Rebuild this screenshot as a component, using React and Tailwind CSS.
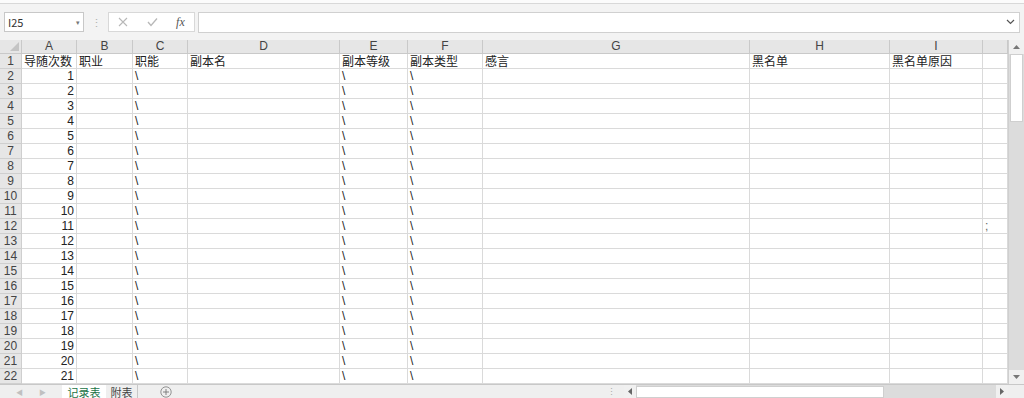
import React from "react";

const cols = [
  { w: 55, l: "A" },
  { w: 56, l: "B" },
  { w: 55, l: "C" },
  { w: 152, l: "D" },
  { w: 68, l: "E" },
  { w: 75, l: "F" },
  { w: 267, l: "G" },
  { w: 140, l: "H" },
  { w: 93, l: "I" },
  { w: 25, l: "" },
];

const headerRow = ["导随次数", "职业", "职能", "副本名", "副本等级", "副本类型", "感言", "黑名单", "黑名单原因", ""];

const font = { fontFamily: '"Noto Sans CJK SC", "Liberation Sans", sans-serif' };
const latin = { fontFamily: '"Liberation Sans", "Noto Sans CJK SC", sans-serif' };

function Cell({ children, align = "left", extra = "", style }) {
  return (
    <div
      className={`h-[15px] border-r border-b border-[#dadada] bg-white text-[12px] leading-[14px] text-[#222] whitespace-nowrap px-[2px] ${
        align === "right" ? "text-right" : "text-left"
      } ${extra}`}
      style={style}
    >
      {children}
    </div>
  );
}

export default function App() {
  const rows = [];
  for (let r = 1; r <= 22; r++) rows.push(r);
  const template = "22px " + cols.map((c) => c.w + "px").join(" ");

  return (
    <div className="w-[1024px] h-[398px] bg-[#f3f3f3] overflow-hidden flex flex-col" style={font}>
      {/* ribbon remnant */}
      <div className="h-[4px] bg-[#fbfbfb] border-b border-[#d8d8d8] shrink-0"></div>
      {/* formula bar */}
      <div className="h-[36px] flex items-center px-[4px] shrink-0">
        <div className="w-[80px] h-[20px] bg-white border border-[#c8c8c8] flex items-center justify-between px-[3px] text-[11px] text-[#333]">
          <span>I25</span>
          <span className="text-[7px] text-[#777]">▾</span>
        </div>
        <div className="w-[24px] flex justify-center text-[#b0b0b0] text-[11px]">⋮</div>
        <div className="w-[87px] h-[20px] bg-white border border-[#d8d8d8] flex items-center justify-around text-[#b8b8b8]">
          <svg width="10" height="10" viewBox="0 0 10 10"><path d="M1 1 L9 9 M9 1 L1 9" stroke="#b8b8b8" strokeWidth="1.1" fill="none" /></svg>
          <svg width="11" height="10" viewBox="0 0 11 10"><path d="M1 5 L4 8.5 L10 1.5" stroke="#b8b8b8" strokeWidth="1.3" fill="none" /></svg>
          <span className="text-[12px] italic text-[#555]" style={{ fontFamily: '"Liberation Serif", serif' }}>fx</span>
        </div>
        <div className="w-[3px]"></div>
        <div className="flex-1 h-[21px] bg-white border border-[#d0d0d0] flex items-center justify-end pr-[4px]">
          <svg width="9" height="6" viewBox="0 0 9 6"><path d="M1 1 L4.5 4.5 L8 1" stroke="#555" strokeWidth="1.2" fill="none" /></svg>
        </div>
      </div>
      {/* grid + vscroll */}
      <div className="flex shrink-0 h-[344px]">
        <div className="w-[1008px] overflow-hidden bg-white">
          <div className="grid" style={{ gridTemplateColumns: template }}>
            <div className="h-[14px] bg-[#e6e6e6] border-r border-b border-[#c9c9c9] relative">
              <svg className="absolute right-[2px] bottom-[2px]" width="9" height="9" viewBox="0 0 9 9"><path d="M9 0 L9 9 L0 9 Z" fill="#c4c4c4" /></svg>
            </div>
            {cols.map((c, i) => (
              <div key={i} className="h-[14px] bg-[#e6e6e6] border-r border-b border-[#c9c9c9] text-center text-[12px] leading-[13px] text-[#444]" style={latin}>
                {c.l}
              </div>
            ))}
            {rows.map((r) => (
              <React.Fragment key={r}>
                <div className="h-[15px] bg-[#e6e6e6] border-r border-b border-[#cfcfcf] text-center text-[12px] leading-[14px] text-[#444]" style={latin}>
                  {r}
                </div>
                {cols.map((c, i) => {
                  let content = "";
                  let align = "left";
                  let isLatin = false;
                  if (r === 1) content = headerRow[i];
                  else {
                    if (i === 0) {
                      content = String(r - 1);
                      align = "right";
                      isLatin = true;
                    }
                    if (i === 2 || i === 4 || i === 5) {
                      content = "\\";
                      isLatin = true;
                    }
                    if (i === 9 && r === 12) {
                      content = ";";
                      isLatin = true;
                    }
                  }
                  return (
                    <Cell
                      key={i}
                      align={align}
                      style={isLatin ? latin : undefined}
                      extra={i === 9 && r === 12 ? "text-[9px] text-[#666]" : ""}
                    >
                      {content}
                    </Cell>
                  );
                })}
              </React.Fragment>
            ))}
          </div>
        </div>
        <div className="w-[16px] bg-[#dcdcdc] flex flex-col border-l border-[#cfcfcf]">
          <div className="h-[14px] bg-[#f0f0f0] flex items-center justify-center">
            <svg width="7" height="4" viewBox="0 0 7 4"><path d="M0 4 L3.5 0 L7 4 Z" fill="#777" /></svg>
          </div>
          <div className="h-[68px] bg-white mx-[1px] border border-[#cfcfcf]"></div>
          <div className="flex-1"></div>
          <div className="h-[14px] bg-[#f0f0f0] flex items-center justify-center">
            <svg width="7" height="4" viewBox="0 0 7 4"><path d="M0 0 L3.5 4 L7 0 Z" fill="#777" /></svg>
          </div>
        </div>
      </div>
      {/* bottom tab bar */}
      <div className="flex-1 flex items-stretch border-t border-[#c8c8c8] bg-[#efefef] text-[11px]">
        <div className="w-[62px] flex items-center justify-around px-[8px] text-[#c0c0c0] text-[7px]">
          <span>◀</span>
          <span>▶</span>
        </div>
        <div className="w-[44px] bg-white flex items-center justify-center text-[#217346] leading-[12px]">记录表</div>
        <div className="w-[32px] flex items-center justify-center text-[#444] border-r border-[#c8c8c8] leading-[12px]">附表</div>
        <div className="w-[56px] flex items-center justify-center">
          <svg width="12" height="12" viewBox="0 0 12 12">
            <circle cx="6" cy="6" r="5.2" stroke="#888" strokeWidth="0.9" fill="none" />
            <path d="M6 3 V9 M3 6 H9" stroke="#777" strokeWidth="0.9" />
          </svg>
        </div>
        <div className="w-[430px] flex items-center justify-end pr-[8px] text-[#aaa] text-[9px]">⋮</div>
        <div className="w-[12px] bg-[#f0f0f0] flex items-center justify-center">
          <svg width="4" height="7" viewBox="0 0 4 7"><path d="M4 0 L0 3.5 L4 7 Z" fill="#666" /></svg>
        </div>
        <div className="w-[360px] bg-[#dcdcdc] flex items-stretch py-[1px]">
          <div className="w-[248px] bg-white border border-[#cfcfcf]"></div>
        </div>
        <div className="w-[12px] bg-[#f0f0f0] flex items-center justify-center">
          <svg width="4" height="7" viewBox="0 0 4 7"><path d="M0 0 L4 3.5 L0 7 Z" fill="#666" /></svg>
        </div>
        <div className="flex-1 bg-[#efefef]"></div>
      </div>
    </div>
  );
}
